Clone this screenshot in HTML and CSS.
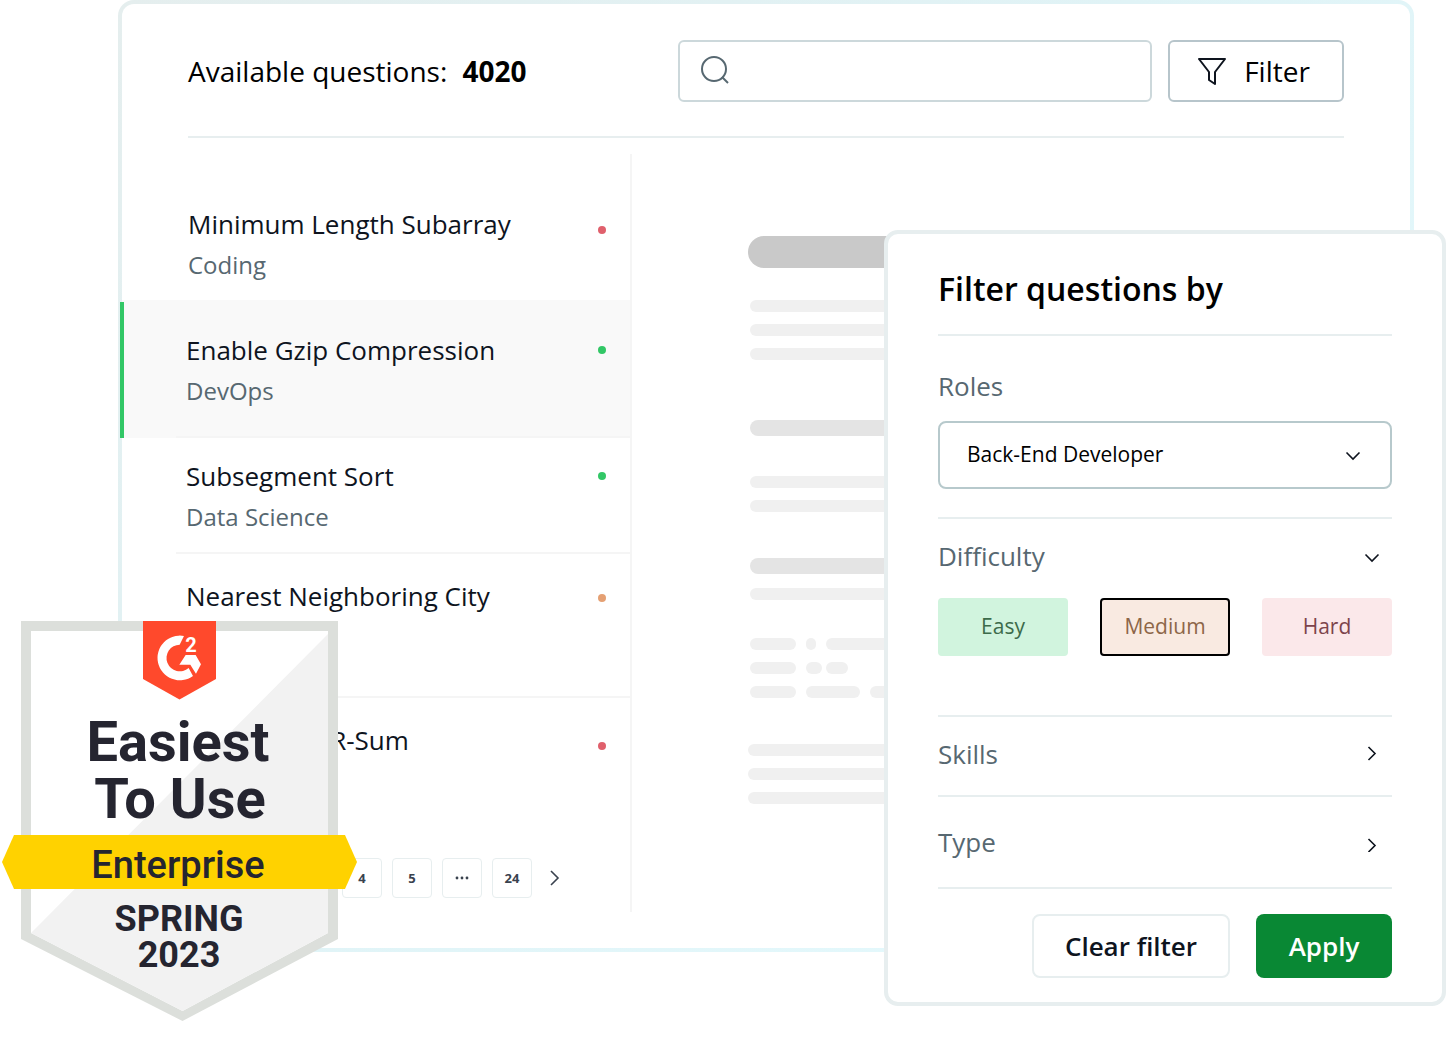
FILE: index.html
```html
<!DOCTYPE html>
<html lang="en">
<head>
    <meta charset="UTF-8">
    <meta name="viewport" content="width=device-width, initial-scale=1.0">
    <title>Question Library</title>
    <link rel="stylesheet" href="styles.css">
</head>
<body>
    <div class="page">
        <main class="card">
            <header class="toolbar">
                <p class="count">Available questions: <strong>4020</strong></p>
                <label class="search">
                    <svg width="28" height="28" viewBox="0 0 28 28" fill="none" stroke="#576871" stroke-width="2" aria-hidden="true">
                        <circle cx="13" cy="13" r="12"/>
                        <path d="M21 21l6 6"/>
                    </svg>
                    <input type="search" aria-label="Search questions">
                </label>
                <button type="button" class="filter-btn">
                    <svg width="28" height="28" viewBox="0 0 28 28" fill="none" stroke="#0e141e" stroke-width="2" stroke-linejoin="round" aria-hidden="true">
                        <path d="M1 2h26L17 15v12l-6-4v-8z"/>
                    </svg>
                    Filter
                </button>
            </header>

            <div class="content">
                <section class="list">
                    <ul class="questions">
                        <li class="question">
                            <div class="question-body">
                                <h2>Minimum Length Subarray</h2>
                                <p>Coding</p>
                                <span class="dot hard"></span>
                            </div>
                        </li>
                        <li class="question selected">
                            <div class="question-body">
                                <h2>Enable Gzip Compression</h2>
                                <p>DevOps</p>
                                <span class="dot easy"></span>
                            </div>
                        </li>
                        <li class="question">
                            <div class="question-body">
                                <h2>Subsegment Sort</h2>
                                <p>Data Science</p>
                                <span class="dot easy"></span>
                            </div>
                        </li>
                        <li class="question tall">
                            <div class="question-body">
                                <h2>Nearest Neighboring City</h2>
                                <span class="dot medium"></span>
                            </div>
                        </li>
                        <li class="question tall">
                            <div class="question-body">
                                <h2>Smallest XOR-Sum</h2>
                                <span class="dot hard"></span>
                            </div>
                        </li>
                    </ul>
                    <nav class="pagination" aria-label="Pages">
                        <button type="button">4</button>
                        <button type="button">5</button>
                        <button type="button" aria-label="More pages">
                            <svg width="14" height="4" viewBox="0 0 14 4" fill="#39424e"><circle cx="2" cy="2" r="1.4"/><circle cx="7" cy="2" r="1.4"/><circle cx="12" cy="2" r="1.4"/></svg>
                        </button>
                        <button type="button">24</button>
                        <button type="button" class="next" aria-label="Next page">
                            <svg width="10" height="16" viewBox="0 0 10 16" fill="none" stroke="#39424e" stroke-width="1.6"><path d="M1 1l7 7-7 7"/></svg>
                        </button>
                    </nav>
                </section>

                <section class="preview" aria-hidden="true">
                    <div class="bar title"></div>
                    <div class="group">
                        <div class="bar"></div>
                        <div class="bar"></div>
                        <div class="bar"></div>
                    </div>
                    <div class="group heading-group">
                        <div class="bar heading"></div>
                    </div>
                    <div class="group two-lines">
                        <div class="bar"></div>
                        <div class="bar"></div>
                    </div>
                    <div class="group sample">
                        <div class="bar heading"></div>
                        <div class="bar"></div>
                    </div>
                    <div class="group code">
                        <div class="tokens"><i class="bar w46"></i><i class="bar w10"></i><i class="bar w80"></i></div>
                        <div class="tokens"><i class="bar w46"></i><span class="pair"><i class="bar w16"></i><i class="bar w22"></i></span></div>
                        <div class="tokens"><i class="bar w46"></i><i class="bar w54"></i><i class="bar w80"></i></div>
                    </div>
                    <div class="group last">
                        <div class="bar"></div>
                        <div class="bar"></div>
                        <div class="bar"></div>
                    </div>
                </section>
            </div>
        </main>

        <form class="filter-panel">
            <h1>Filter questions by</h1>
            <div class="section roles">
                <label for="role">Roles</label>
                <div class="select-wrap">
                    <select id="role">
                        <option>Back-End Developer</option>
                    </select>
                    <svg class="select-arrow" width="16" height="10" viewBox="0 0 16 10" fill="none" stroke="#0e141e" stroke-width="1.6"><path d="M1.500 1.500L8 8l6.500-6.500"/></svg>
                </div>
            </div>
            <div class="section difficulty">
                <button type="button" class="section-toggle" aria-expanded="true">
                    Difficulty
                    <svg width="16" height="16" viewBox="0 0 16 16" fill="none" stroke="#0e141e" stroke-width="1.6"><path d="M1.500 6.500L8 13l6.500-6.500"/></svg>
                </button>
                <div class="levels">
                    <button type="button" class="level easy">Easy</button>
                    <button type="button" class="level medium active" aria-pressed="true">Medium</button>
                    <button type="button" class="level hard">Hard</button>
                </div>
            </div>
            <div class="section skills">
                <button type="button" class="section-toggle" aria-expanded="false">
                    Skills
                    <svg width="16" height="16" viewBox="0 0 16 16" fill="none" stroke="#0e141e" stroke-width="1.6"><path d="M4.500 1L11 7.500 4.500 14"/></svg>
                </button>
            </div>
            <div class="section type">
                <button type="button" class="section-toggle" aria-expanded="false">
                    Type
                    <svg width="16" height="20" viewBox="0 0 16 20" fill="none" stroke="#0e141e" stroke-width="1.6"><path d="M4.500 7L11 13.500 4.500 20"/></svg>
                </button>
            </div>
            <div class="actions">
                <button type="button" class="clear">Clear filter</button>
                <button type="button" class="apply">Apply</button>
            </div>
        </form>

        <svg class="badge" width="360" height="402" viewBox="0 0 360 402" role="img" aria-label="G2 award">
            <path fill="#dcdfdb" d="M21 1h317v318L182.500 401 21 319z"/>
            <path fill="#fff" d="M31 11h297v302L182.500 391 31 313z"/>
            <path fill="#f2f2f2" d="M328 14v299L182.500 391 31 313z"/>
            <path fill="#ff492c" d="M143 1h73v58l-36.500 20.500L143 59z"/>
            <g fill="#fff" transform="translate(0 -20) scale(.3333)">
                <path d="M552 108A67 67 0 1 0 579 228L566 204A40 40 0 1 1 539 134z"/>
                <path d="M557 165h30l16 28-15 28-17-27h-33z"/>
            </g>
            <text class="logo-two" x="191" y="32">2</text>
            <path fill="#ffd200" d="M14 215h331l12 27-12 27H14L2 242z"/>
            <text class="badge-title" x="178" y="141">Easiest</text>
            <text class="badge-title" x="180" y="198">To Use</text>
            <text class="badge-ribbon" x="178" y="258">Enterprise</text>
            <text class="badge-date" x="179" y="311">SPRING</text>
            <text class="badge-date" x="179" y="347">2023</text>
        </svg>
    </div>
</body>
</html>
```
FILE: styles.css
```css
* {
    box-sizing: border-box;
}
body {
    margin: 0;
    background: #fff;
    color: #0e141e;
    font-family: "Open Sans", "Noto Sans", sans-serif;
}
h1, h2, p, ul {
    margin: 0;
    padding: 0;
}
button, input, select {
    font-family: inherit;
    color: inherit;
    background: none;
    border: none;
    padding: 0;
    margin: 0;
}
button {
    cursor: pointer;
}
.page {
    position: relative;
    min-height: 100vh;
    padding: 0 32px 0 118px;
}

/* Main card */
.card {
    border: 4px solid transparent;
    border-radius: 16px;
    background: linear-gradient(#fff, #fff) padding-box,
                linear-gradient(135deg, #e5eeee, #e0f3f6 45%, #e5fbff) border-box;
    padding-bottom: 36px;
}
.toolbar {
    display: flex;
    align-items: center;
    gap: 16px;
    margin: 0 66px;
    padding: 36px 0 34px;
    border-bottom: 2px solid #e7eeef;
}
.count {
    flex: 1;
    font-size: 28px;
    color: #000;
}
.count strong {
    margin-left: 8px;
}
.search {
    display: flex;
    align-items: center;
    flex: 0 1 474px;
    height: 62px;
    padding: 0 21px 2px;
    border: 2px solid #ccd8db;
    border-radius: 6px;
}
.search input {
    flex: 1;
    min-width: 0;
    margin-left: 16px;
    font-size: 26px;
    outline: none;
}
.filter-btn {
    display: flex;
    align-items: center;
    justify-content: center;
    gap: 18px;
    width: 176px;
    height: 62px;
    padding-right: 4px;
    border: 2px solid #b7c5cb;
    border-radius: 6px;
    font-size: 28px;
    color: #000;
}
.content {
    display: flex;
    padding-top: 16px;
}

/* Question list */
.list {
    width: 510px;
    border-right: 2px solid #f5f5f5;
}
.questions {
    list-style: none;
}
.question {
    position: relative;
    padding-left: 54px;
}
.question-body {
    display: grid;
    grid-template-columns: 1fr 8px;
    grid-template-rows: 38px 40px;
    row-gap: 2px;
    align-items: center;
    padding: 19px 24px 15px 10px;
    border-bottom: 2px solid #f5f5f5;
}
.question:first-child .question-body {
    padding-top: 51px;
    padding-left: 12px;
    border-bottom: none;
}
.question.selected {
    background: #f9f9f9;
}
.question.selected::before {
    content: "";
    position: absolute;
    left: -2px;
    top: 2px;
    bottom: 0;
    width: 4px;
    background: #32c766;
}
.question.selected .question-body {
    padding-top: 31px;
    padding-bottom: 25px;
}
.question.tall .question-body {
    padding-top: 23px;
    padding-bottom: 39px;
}
.question:last-child .question-body {
    border-bottom: none;
}
.question h2 {
    font-size: 26px;
    font-weight: 400;
    line-height: 38px;
}
.question p {
    grid-row: 2;
    font-size: 24px;
    line-height: 40px;
    color: #576871;
}
.dot {
    grid-column: 2;
    grid-row: 1;
    width: 8px;
    height: 8px;
    border-radius: 50%;
}
.dot.easy {
    background: #32c766;
}
.dot.medium {
    margin-top: 4px;
    background: #e5a073;
}
.dot.hard {
    margin-top: 12px;
    background: #e0606c;
}
.pagination {
    display: flex;
    gap: 10px;
    padding: 18px 0 14px 220px;
}
.pagination button {
    display: flex;
    align-items: center;
    justify-content: center;
    width: 40px;
    height: 40px;
    border: 1px solid #e7eeef;
    border-radius: 4px;
    font-size: 13px;
    font-weight: 700;
    color: #39424e;
}
.pagination .next {
    width: 26px;
    border: none;
}

/* Question preview placeholder */
.preview {
    flex: 1;
    padding: 82px 66px 0 116px;
}
.bar {
    height: 12px;
    border-radius: 8px;
    background: #f0f0f0;
}
.bar.title {
    height: 32px;
    border-radius: 16px;
    background: #c9c9c9;
}
.bar.heading {
    height: 16px;
    background: #e4e4e4;
}
.group {
    display: grid;
    gap: 12px;
    margin: 32px 0 0 2px;
}
.heading-group {
    margin-top: 60px;
}
.two-lines {
    margin-top: 40px;
}
.sample {
    gap: 14px;
    margin-top: 46px;
}
.code {
    margin-top: 38px;
}
.last {
    margin: 46px 0 0;
}
.tokens {
    display: flex;
    gap: 10px;
}
.pair {
    display: flex;
    gap: 4px;
}
.w10 {
    width: 10px;
}
.w16 {
    width: 16px;
}
.w22 {
    width: 22px;
}
.w46 {
    width: 46px;
}
.w54 {
    width: 54px;
}
.w80 {
    width: 80px;
}

/* Filter panel */
.filter-panel {
    position: absolute;
    top: 230px;
    right: 0;
    width: 562px;
    padding: 30px 50px 24px;
    background: #fff;
    border: 4px solid #e7eeef;
    border-radius: 14px;
}
.filter-panel h1 {
    padding-bottom: 20px;
    border-bottom: 2px solid #e7eeef;
    font-size: 32px;
    font-weight: 600;
    line-height: 50px;
    color: #000;
}
.section {
    border-bottom: 2px solid #e7eeef;
    font-size: 26px;
    line-height: 40px;
    color: #576871;
}
.roles {
    padding: 30px 0 28px;
}
.roles label {
    display: block;
    margin-bottom: 15px;
}
.select-wrap {
    position: relative;
}
.select-wrap select {
    display: block;
    width: 100%;
    height: 68px;
    padding: 0 60px 3px 27px;
    border: 2px solid #b7c9cc;
    border-radius: 8px;
    font-size: 21px;
    color: #000;
    appearance: none;
}
.select-arrow {
    position: absolute;
    top: 30px;
    right: 31px;
    pointer-events: none;
}
.section-toggle {
    display: flex;
    align-items: center;
    justify-content: space-between;
    width: 100%;
    padding: 0 12px 2px 0;
    font-size: 26px;
    line-height: 38px;
}
.difficulty {
    padding: 18px 0 59px;
}
.levels {
    display: grid;
    grid-template-columns: repeat(3, 1fr);
    gap: 32px;
    margin-top: 21px;
}
.level {
    height: 58px;
    padding-bottom: 2px;
    border-radius: 4px;
    font-size: 21px;
}
.level.easy {
    background: #d1f4de;
    color: #3c6b4a;
}
.level.medium {
    background: #f9eae1;
    color: #8d6648;
}
.level.hard {
    background: #fbe8ea;
    color: #7d444c;
}
.level.active {
    border: 2px solid #000;
}
.skills {
    padding: 18px 0 20px;
}
.type {
    padding: 26px 0 24px;
}
.actions {
    display: flex;
    justify-content: flex-end;
    gap: 26px;
    padding-top: 25px;
}
.actions button {
    height: 64px;
    border-radius: 8px;
    font-size: 26px;
    font-weight: 600;
}
.actions .clear {
    width: 198px;
    border: 2px solid #e7eeef;
}
.actions .apply {
    width: 136px;
    background: #098834;
    color: #fff;
}

/* Award badge */
.badge {
    position: absolute;
    left: 0;
    top: 620px;
}
.badge text {
    font-family: Roboto, sans-serif;
    font-weight: 700;
    text-anchor: middle;
    fill: #252530;
}
.badge .logo-two {
    font-size: 20px;
    fill: #fff;
}
.badge .badge-title {
    font-size: 56px;
}
.badge .badge-ribbon {
    font-size: 38px;
    font-weight: 500;
}
.badge .badge-date {
    font-size: 36px;
}
```
